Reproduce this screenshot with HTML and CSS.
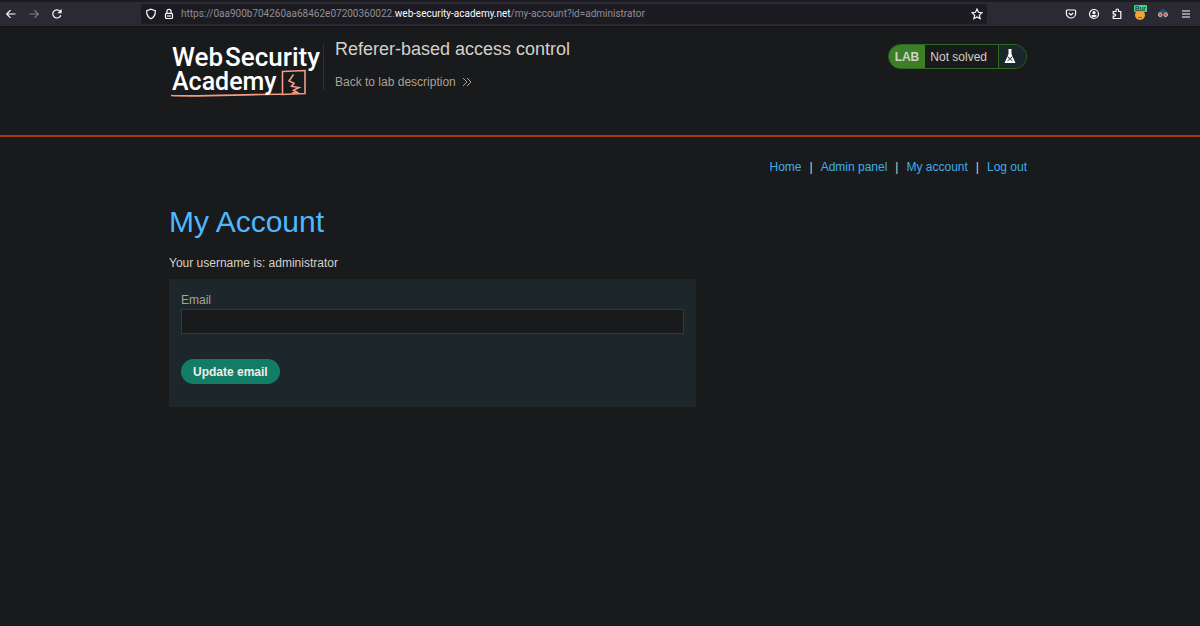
FILE: index.html
```html
<!DOCTYPE html>
<html lang="en">
<head>
    <meta charset="UTF-8">
    <meta name="viewport" content="width=device-width, initial-scale=1.0">
    <title>Referer-based access control</title>
    <link rel="stylesheet" href="styles.css">
</head>
<body>
    <div class="toolbar">
        <div class="nav-buttons">
            <button type="button" aria-label="Back">
                <svg width="12" height="12" viewBox="0 0 12 12"><path d="M10.5 6H2M5.5 2.2L1.7 6l3.8 3.8"/></svg>
            </button>
            <button type="button" class="disabled" aria-label="Forward">
                <svg width="12" height="12" viewBox="0 0 12 12"><path d="M1.5 6H10M6.5 2.2L10.3 6 6.5 9.8"/></svg>
            </button>
            <button type="button" aria-label="Reload">
                <svg width="12" height="12" viewBox="0 0 12 12"><path d="M9.8 7.2A4.1 4.1 0 1 1 9 3.2"/><path class="fill" d="M10.6 1v4.2H6.4z"/></svg>
            </button>
        </div>
        <div class="url-bar">
            <svg width="12" height="12" viewBox="0 0 12 12"><path d="M6 1.2l4.3 1.5c.2 3.7-1 6.4-4.3 8.1C2.7 9.1 1.5 6.4 1.7 2.7z"/></svg>
            <svg width="12" height="12" viewBox="0 0 12 12"><path d="M3.9 5.3V3.4a2.1 2.1 0 0 1 4.2 0v1.9"/><rect x="2.5" y="5.3" width="7" height="5.2" rx="1"/><path d="M4 8h4"/></svg>
            <span class="url">https://0aa900b704260aa68462e07200360022.<b>web-security-academy.net</b>/my-account?id=administrator</span>
            <button type="button" aria-label="Bookmark">
                <svg width="12" height="12" viewBox="0 0 12 12"><path d="M6 1.1l1.5 3.2 3.5.4-2.6 2.4.7 3.5L6 8.9l-3.1 1.7.7-3.5L1 4.7l3.5-.4z"/></svg>
            </button>
        </div>
        <div class="tools">
            <button type="button" aria-label="Pocket">
                <svg width="12" height="12" viewBox="0 0 12 12"><path d="M2.3 2h7.4q.9 0 .9.9v2.5a4.6 4.6 0 0 1-9.2 0V2.9q0-.9.9-.9zM3.8 5L6 7l2.2-2"/></svg>
            </button>
            <button type="button" aria-label="Account">
                <svg width="12" height="12" viewBox="0 0 12 12"><circle cx="6" cy="6" r="4.5"/><circle class="fill" cx="6" cy="4.7" r="1.6"/><path class="fill" d="M3.3 8.3q0-1.3 1.3-1.3h2.8q1.3 0 1.3 1.3Q6 10 3.3 8.3z"/></svg>
            </button>
            <button type="button" aria-label="Extensions">
                <svg width="12" height="12" viewBox="0 0 12 12"><path d="M5 3.5V2.3a1.3 1.3 0 0 1 2.6 0v1.2h2.2v7H2.2V8.2h1.2a1.2 1.2 0 0 0 0-2.4H2.2V3.5z"/></svg>
            </button>
            <button type="button" class="proxy" aria-label="Proxy">
                <svg width="14" height="14" viewBox="0 0 14 14"><circle cx="6" cy="8" r="5" fill="#f2a33a" stroke="none"/><path d="M4 10.5h4" stroke="#aa5624"/></svg>
                <span class="badge">Bur</span>
            </button>
            <button type="button" aria-label="User agent">
                <svg width="12" height="12" viewBox="0 0 12 12"><path d="M2.5 4q.5-3 3.5-3t3.5 3z" fill="#264f60" stroke="none"/><path d="M1 4.5h10" stroke="#2e6574"/><circle cx="3.3" cy="6.8" r="1.8" fill="#d64a3c" stroke="#d9c9c6" stroke-width="1"/><circle cx="8.7" cy="6.8" r="1.8" fill="#d64a3c" stroke="#d9c9c6" stroke-width="1"/><path d="M3 10q3-1.5 6 0" stroke="#264f60"/></svg>
            </button>
            <button type="button" aria-label="Menu">
                <svg width="12" height="12" viewBox="0 0 12 12"><path d="M2 3h8M2 6h8M2 9h8"/></svg>
            </button>
        </div>
    </div>

    <header class="lab-header">
        <div class="container header-row">
            <a class="logo" href="#" aria-label="Web Security Academy">
                <svg width="154" height="60" viewBox="0 0 154 60">
                    <path class="logo-line" d="M2 53.5C30 55 75 52.2 112 52.3M113.5 53V29.5L136 28.5V51.5L112 52.5"/>
                    <path class="logo-line" d="M124.500 32.500L120 39l5 2.200-2.500 3 7.500 1.300-5.500 2.700 3.500 2-5 .8"/>
                    <text x="3" y="24">Web</text>
                    <text x="56" y="24">Security</text>
                    <text class="second-line" x="3" y="48">Academy</text>
                </svg>
            </a>
            <div class="title">
                <h2>Referer-based access control</h2>
                <a href="#">Back to lab description
                    <svg width="10" height="10" viewBox="0 0 10 10"><path d="M1 1l4 4-4 4M5 1l4 4-4 4"/></svg>
                </a>
            </div>
            <div class="lab-status">
                <span class="tag">LAB</span>
                <span class="state">Not solved</span>
                <span class="flask">
                    <svg width="12" height="16" viewBox="0 0 12 16"><path d="M4.5 1h3v5l4 9H.5l4-9z" fill="#fff"/><path d="M3.5 8.5l5 4.5M8.5 8.5l-5 4.5" stroke="#1c272b"/></svg>
                </span>
            </div>
        </div>
    </header>

    <main class="container">
        <nav class="top-links">
            <a href="#">Home</a><span>|</span>
            <a href="#">Admin panel</a><span>|</span>
            <a href="#">My account</a><span>|</span>
            <a href="#">Log out</a>
        </nav>
        <h1>My Account</h1>
        <p>Your username is: administrator</p>
        <form class="login-form">
            <label for="email">Email</label>
            <input id="email" type="email" name="email">
            <button type="submit">Update email</button>
        </form>
    </main>
</body>
</html>
```
FILE: styles.css
```css
* {
    box-sizing: border-box;
}
body {
    margin: 0;
    min-height: 100vh;
    background-color: #191a1c;
    border-bottom: 1px solid #1c1522;
    color: #d5d1c9;
    font-family: "Liberation Sans", Arial, sans-serif;
    font-size: 12px;
    line-height: 16px;
}
a {
    text-decoration: none;
}
button {
    padding: 0;
    border: none;
    background: none;
    font-family: inherit;
    cursor: pointer;
}
svg {
    display: block;
}

/* browser toolbar */
.toolbar {
    display: flex;
    align-items: center;
    height: 27px;
    padding: 0 8px 0 5px;
    background-color: #2b2a33;
    border-top: 2px solid #1c1b22;
    border-bottom: 1px solid #131217;
}
.toolbar svg {
    flex: none;
    fill: none;
    stroke: #fbfbfe;
    stroke-width: 1.2;
}
.toolbar .fill {
    fill: #fbfbfe;
    stroke: none;
}
.toolbar .disabled {
    opacity: 0.4;
}
.nav-buttons {
    display: flex;
    gap: 11px;
    width: 136px;
}
.url-bar {
    display: flex;
    flex: 1;
    align-items: center;
    gap: 6px;
    height: 20px;
    padding: 0 4px;
    border-radius: 3px;
    background-color: #1c1b22;
}
.url {
    flex: 1;
    color: #8f8f96;
    font-family: Roboto, sans-serif;
    font-size: 10px;
    line-height: 18px;
    white-space: nowrap;
}
.url b {
    color: #fbfbfe;
    font-weight: 400;
}
.tools {
    display: flex;
    gap: 11px;
    margin-left: 78px;
}
.proxy {
    position: relative;
    width: 12px;
}
.badge {
    position: absolute;
    top: -2px;
    left: 0;
    padding: 0 1px;
    border-radius: 1px;
    background-color: #3ddc84;
    color: #15141a;
    font-size: 7px;
    line-height: 7px;
}

/* lab banner */
.container {
    max-width: 862px;
    margin: 0 auto;
    padding-right: 4px;
}
.lab-header {
    height: 110px;
    padding-top: 12px;
    border-bottom: 2px solid #a8330f;
}
.header-row {
    display: flex;
    align-items: flex-start;
}
.logo {
    padding-top: 3px;
}
.logo text {
    fill: #fff;
    font-family: Roboto, sans-serif;
    font-size: 26px;
    font-weight: 500;
}
.logo .second-line {
    font-size: 25px;
}
.logo-line {
    fill: none;
    stroke: #f59b83;
    stroke-width: 1.6;
}
.title {
    flex: 1;
    padding-left: 12px;
    background: linear-gradient(#2f3234, #2f3234) no-repeat 0 5px / 1px 46px;
}
.title h2 {
    margin: 0 0 15px;
    font-size: 18px;
    font-weight: 400;
    line-height: 20px;
}
.title a {
    display: flex;
    align-items: center;
    gap: 6px;
    color: #a8a196;
}
.title svg {
    fill: none;
    stroke: #a8a196;
}
.lab-status {
    display: flex;
    height: 25px;
    margin-top: 5px;
    overflow: hidden;
    border: 1px solid #2d6b22;
    border-radius: 13px;
    line-height: 24px;
}
.tag {
    padding: 0 6px;
    background-color: #3c7f26;
    font-weight: 700;
}
.state {
    padding: 0 11px 0 5px;
}
.flask {
    padding: 3px 10px 0 5px;
    border-left: 1px solid #2d6b22;
    background-color: #1c272b;
}

/* account page */
.top-links {
    display: flex;
    justify-content: flex-end;
    gap: 8px;
    padding-top: 22px;
}
.top-links a {
    color: #40aee6;
}
h1 {
    margin: 29px 0 15px;
    color: #4db8ff;
    font-size: 30px;
    font-weight: 400;
    line-height: 36px;
}
p {
    margin: 0 0 8px;
}
.login-form {
    max-width: 527px;
    padding: 13px 12px 23px;
    background-color: #1d272b;
}
.login-form label {
    display: block;
    margin-bottom: 1px;
    color: #a8a196;
}
.login-form input {
    display: block;
    width: 100%;
    height: 25px;
    margin-bottom: 25px;
    padding: 0 6px;
    border: 1px solid #34383a;
    background-color: #191a1c;
    color: #d5d1c9;
    font: inherit;
}
.login-form button {
    height: 25px;
    padding: 0 12px;
    border-radius: 13px;
    background-color: #127d66;
    color: #f0eeea;
    font-size: 12px;
    font-weight: 700;
}
```
